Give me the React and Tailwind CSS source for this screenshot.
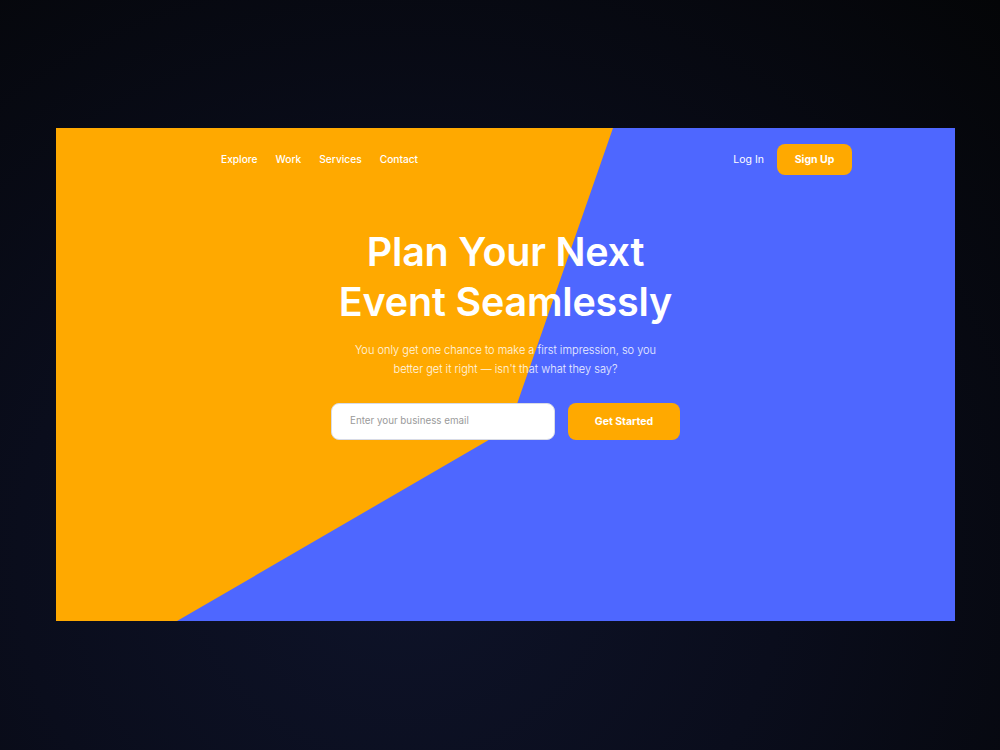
import React from "react";

export default function App() {
  return (
    <div
      className="w-[1000px] h-[750px] pt-[128px] pl-[56px] bg-[radial-gradient(ellipse_at_40%_75%,#0e1329_0%,#0a0d1c_45%,#040507_100%)]"
      style={{ fontFamily: "Inter, 'Open Sans', sans-serif" }}
    >
      <div className="relative w-[899px] h-[493px] bg-[#4e67ff] overflow-hidden">
        <svg
          className="absolute inset-0"
          width="899"
          height="493"
          viewBox="0 0 899 493"
        >
          <path
            d="M0 0 L557 0 L461 276 Q453 300 431 313 L121 493 L0 493 Z"
            fill="#ffa900"
          />
        </svg>
        <div className="relative flex flex-col items-center">
          <nav className="w-full flex items-center justify-between pl-[165px] pr-[103px] pt-[16px] h-[47px]">
            <div className="flex items-center gap-[18px] text-[10.2px] font-medium text-white">
              <span>Explore</span>
              <span>Work</span>
              <span>Services</span>
              <span>Contact</span>
            </div>
            <div className="flex items-center gap-[13px] text-[10.5px] text-white">
              <span className="font-normal">Log In</span>
              <button className="w-[75px] h-[31px] rounded-[8px] bg-[#ffa900] font-bold text-white">
                Sign Up
              </button>
            </div>
          </nav>
          <h1 className="mt-[52px] text-[39.5px] leading-[50px] font-semibold text-white text-center tracking-[-0.2px]">
            Plan Your Next
            <br />
            Event Seamlessly
          </h1>
          <p className="mt-[14px] text-[11px] leading-[19px] font-light text-white/90 text-center">
            You only get one chance to make a first impression, so you
            <br />
            better get it right — isn't that what they say?
          </p>
          <div className="mt-[24px] flex items-center gap-[13px]">
            <div className="w-[224px] h-[37px] rounded-[8px] bg-white border border-[#d8dbe6] flex items-center pl-[18px] text-[9.8px] text-[#9a9a9a]">
              Enter your business email
            </div>
            <button className="w-[112px] h-[37px] rounded-[8px] bg-[#ffa900] text-[10.5px] font-bold text-white">
              Get Started
            </button>
          </div>
        </div>
      </div>
    </div>
  );
}
